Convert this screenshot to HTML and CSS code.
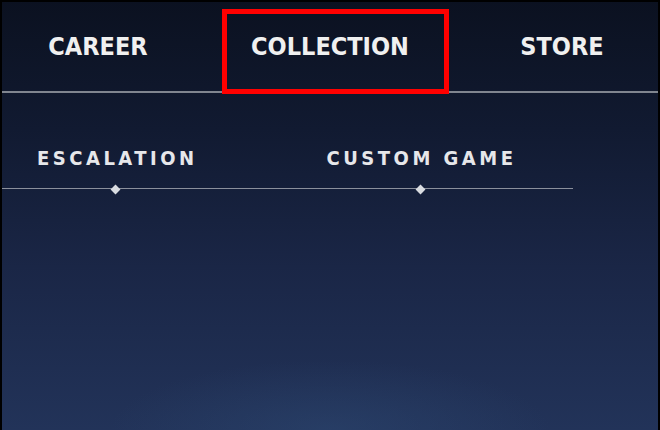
FILE: index.html
```html
<!DOCTYPE html>
<html lang="en">
<head>
  <meta charset="UTF-8" />
  <meta name="viewport" content="width=device-width, initial-scale=1" />
  <title>Menu</title>
  <link rel="stylesheet" href="styles.css">
</head>
<body>
  <nav class="main-nav">
    <a href="#">CAREER</a>
    <a href="#" class="highlight">COLLECTION</a>
    <a href="#">STORE</a>
  </nav>

  <div class="sub-nav">
    <a href="#" class="tab">ESCALATION</a>
    <a href="#" class="tab">CUSTOM GAME</a>
  </div>
</body>
</html>
```

FILE: styles.css
```css
/* Base */
html, body {
  height: 100%;
}
body {
  margin: 0;
  box-sizing: border-box;
  height: 430px;
  overflow: hidden;
  border: 2px solid #000;
  border-bottom: none;
  font-family: 'DejaVu Sans Condensed', 'DejaVu Sans', sans-serif;
  font-weight: 700;
  color: #f0f0f0;
  background:
    radial-gradient(ellipse 220px 70px at 50% 100%, rgba(46, 74, 116, 0.45), rgba(46, 74, 116, 0) 100%),
    linear-gradient(180deg, #0b1120 0%, #111a31 30%, #1a2646 62%, #223359 100%);
}
a {
  color: inherit;
  text-decoration: none;
}

/* Top navigation */
.main-nav {
  display: grid;
  grid-template-columns: repeat(3, 232px);
  justify-content: center;
  align-items: center;
  height: 89px;
  border-bottom: 2px solid #80858f;
}
.main-nav a {
  font-size: 25px;
  line-height: 1;
  text-align: center;
  position: relative;
}
.main-nav a.highlight::after {
  content: "";
  position: absolute;
  left: 8px;
  right: -3px;
  top: -25px;
  bottom: -35px;
  border: 5px solid #ff0000;
}

/* Mode tabs */
.sub-nav {
  display: flex;
  gap: 62px;
  width: 571px;
  margin-top: 55px;
  padding-bottom: 20px;
  border-bottom: 1px solid #8b909c;
}
.sub-nav .tab {
  position: relative;
  padding: 0 32px 0 35px;
  font-size: 20px;
  line-height: 20px;
  letter-spacing: 3.5px;
  color: #e6e7ea;
}
.sub-nav .tab::after {
  content: "";
  position: absolute;
  left: 50%;
  bottom: -25px;
  width: 7px;
  height: 7px;
  margin-left: -3.5px;
  background: #d9dce1;
  transform: rotate(45deg);
}
```
